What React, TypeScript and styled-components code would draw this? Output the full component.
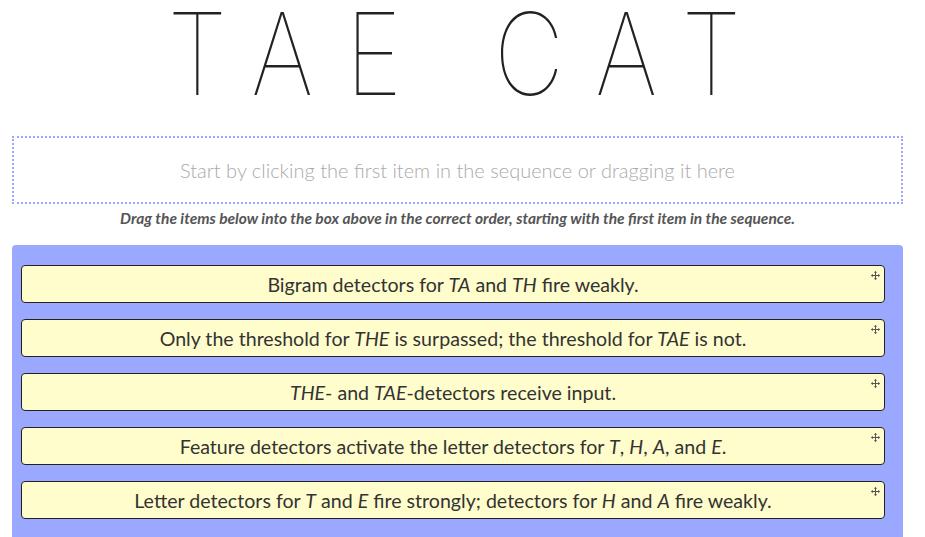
import * as React from 'react'
import styled, { createGlobalStyle } from 'styled-components'

const GlobalStyle = createGlobalStyle`
  html, body {
    margin: 0;
    padding: 0;
    background: #fff;
  }
  body {
    font-family: Lato, "Open Sans", sans-serif;
    color: #333;
  }
`

const Page = styled.div({
  width: '891px',
  margin: '0 0 0 12px',
  display: 'flex',
  flexDirection: 'column'
})

const Title = styled.h1({
  margin: 0,
  height: '136px',
  display: 'flex',
  justifyContent: 'center',
  alignItems: 'flex-start'
})

// thin, narrow display lettering
const TitleText = styled.span({
  display: 'inline-block',
  marginRight: '-26px',
  fontFamily: 'Inter, sans-serif',
  fontWeight: 100,
  fontSize: '114px',
  lineHeight: '108px',
  letterSpacing: '38px',
  color: '#222',
  whiteSpace: 'pre',
  transform: 'scaleX(0.85)',
  transformOrigin: 'center top'
})

const DropZone = styled.div({
  height: '64px',
  border: '2px dotted #9aa6ff',
  display: 'flex',
  alignItems: 'center',
  justifyContent: 'center',
  fontSize: '20px',
  fontWeight: 300,
  color: '#aaa'
})

const Hint = styled.p({
  margin: '5px 0 0',
  height: '36px',
  textAlign: 'center',
  fontSize: '15.5px',
  fontWeight: 700,
  fontStyle: 'italic',
  color: '#555'
})

const Pool = styled.div({
  background: '#9aa9ff',
  borderRadius: '4px 4px 0 0',
  padding: '20px 18px 20px 9px',
  display: 'flex',
  flexDirection: 'column',
  gap: '16px'
})

const Card = styled.div({
  position: 'relative',
  height: '36px',
  background: '#fffdcc',
  border: '1px solid #222',
  borderRadius: '4px',
  display: 'flex',
  alignItems: 'center',
  justifyContent: 'center',
  fontSize: '19.6px',
  fontWeight: 400,
  color: '#333'
})

const Label = styled.span({
  whiteSpace: 'pre'
})

const Grip = styled.svg({
  position: 'absolute',
  top: '5px',
  right: '4px',
  width: '9px',
  height: '9px'
})

// four-way move arrows
const MoveIcon = () => (
  <Grip viewBox="0 0 9 9">
    <g stroke="#555" strokeWidth="1" fill="none">
      <path d="M4.5 0.5v8M0.5 4.5h8" />
    </g>
    <g fill="#555">
      <path d="M4.5 0L2.8 1.8h3.4z" />
      <path d="M4.5 9L2.8 7.2h3.4z" />
      <path d="M0 4.5L1.8 2.8v3.4z" />
      <path d="M9 4.5L7.2 2.8v3.4z" />
    </g>
  </Grip>
)

const items: React.ReactNode[] = [
  <>Bigram detectors for <i>TA</i> and <i>TH</i> fire weakly.</>,
  <>Only the threshold for <i>THE</i> is surpassed; the threshold for <i>TAE</i> is not.</>,
  <><i>THE</i>- and <i>TAE</i>-detectors receive input.</>,
  <>Feature detectors activate the letter detectors for <i>T</i>, <i>H</i>, <i>A</i>, and <i>E</i>.</>,
  <>Letter detectors for <i>T</i> and <i>E</i> fire strongly; detectors for <i>H</i> and <i>A</i> fire weakly.</>
]

const App = () => {
  return (
    <>
      <GlobalStyle />
      <Page>
        <Title><TitleText>{'TAE CAT'}</TitleText></Title>
        <DropZone>Start by clicking the first item in the sequence or dragging it here</DropZone>
        <Hint>Drag the items below into the box above in the correct order, starting with the first item in the sequence.</Hint>
        <Pool>
          {items.map((content, i) => (
            <Card key={`item-${i}`}>
              <Label>{content}</Label>
              <MoveIcon />
            </Card>
          ))}
        </Pool>
      </Page>
    </>
  )
}

export default App
